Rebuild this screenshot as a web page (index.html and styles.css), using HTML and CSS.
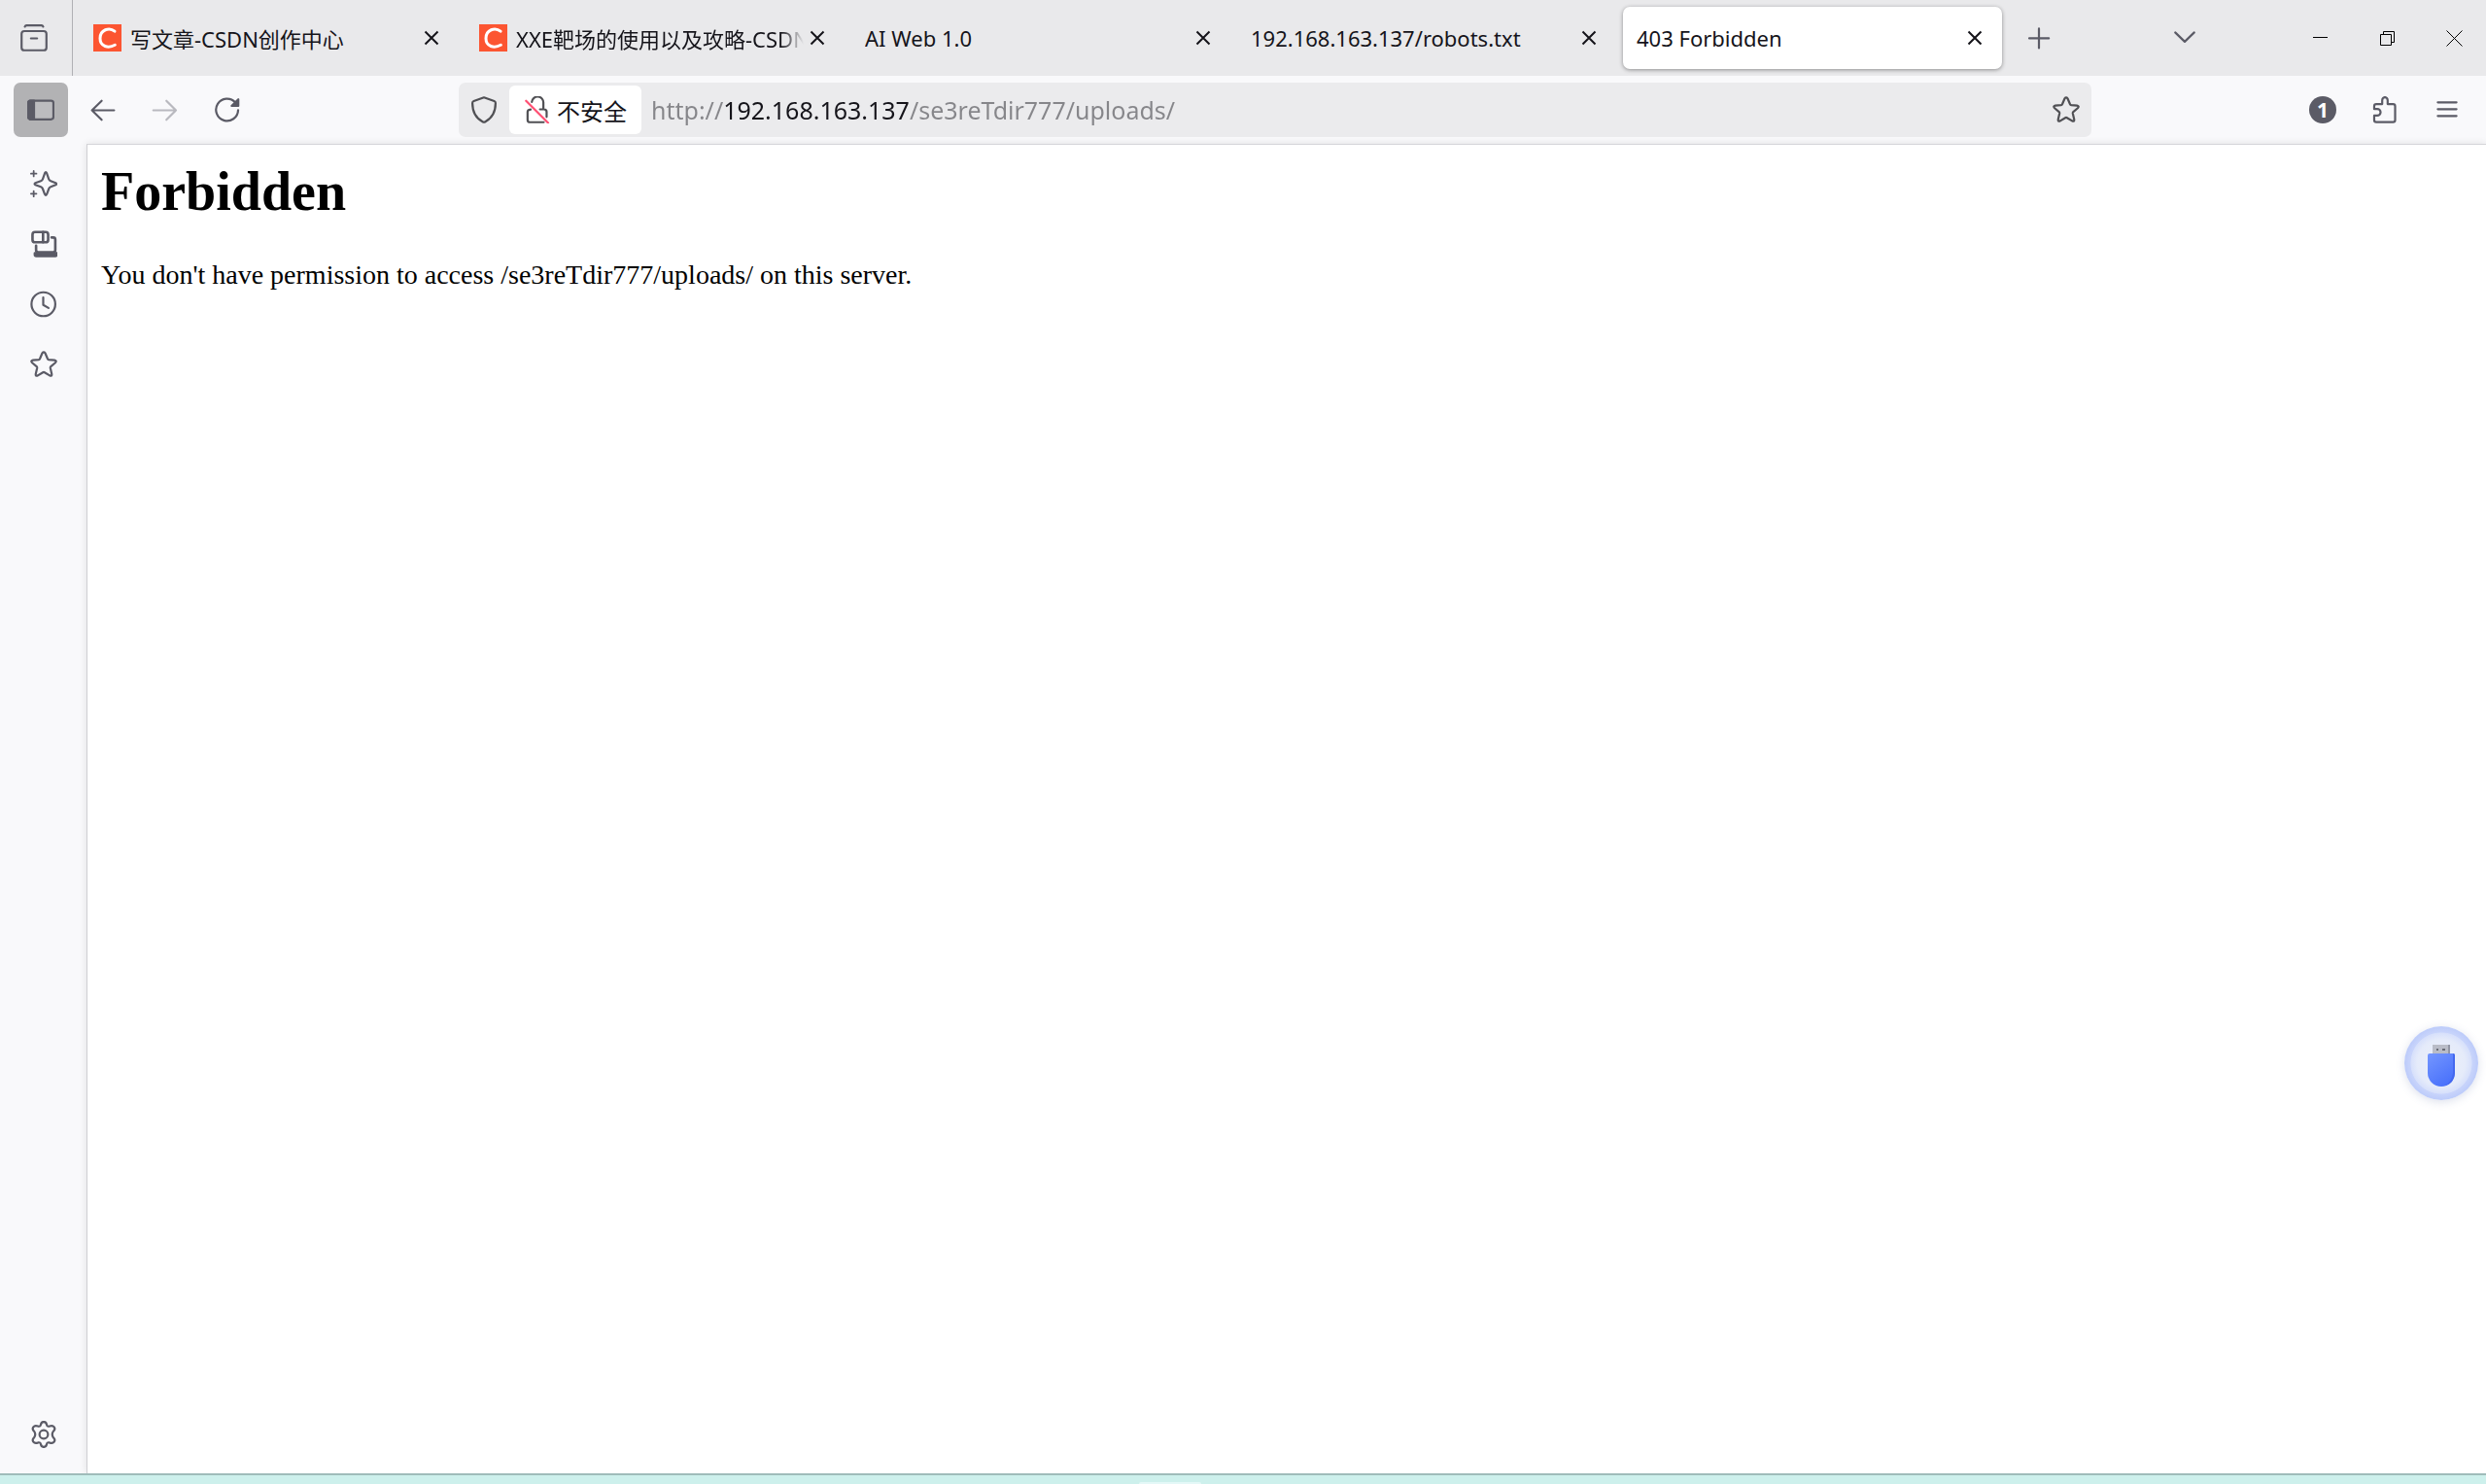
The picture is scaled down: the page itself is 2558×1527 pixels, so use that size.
FILE: index.html
```html
<!DOCTYPE html>
<html lang="zh-CN">
<head>
    <meta charset="UTF-8">
    <meta name="viewport" content="width=device-width, initial-scale=1.0">
    <title>403 Forbidden</title>
    <link rel="stylesheet" href="styles.css">
</head>
<body>
    <svg class="defs" width="0" height="0">
        <symbol id="close" viewBox="0 0 16 16"><path d="M1.5 1.5l13 13M14.5 1.5l-13 13"/></symbol>
        <symbol id="star" viewBox="0 0 16 16"><path d="M7.1 1.4Q8 .2 8.9 1.4L10.3 4.7Q10.5 5.1 11 5.2L14.4 5.5Q15.9 5.8 14.8 7L12.2 9.2Q11.8 9.6 11.9 10.1L12.7 13.6Q12.9 15.1 11.5 14.5L8.5 12.7Q8 12.4 7.5 12.7L4.5 14.5Q3.1 15.1 3.3 13.6L4.1 10.1Q4.2 9.6 3.8 9.2L1.2 7Q.1 5.8 1.6 5.5L5 5.2Q5.5 5.1 5.7 4.7Z"/></symbol>
        <symbol id="csdn" viewBox="0 0 29 28"><path class="csdn-bg" d="M0 0h29v28H0z"/><path class="csdn-c" d="M22 7.2C16.500 2.600 7 5.500 7 14.500c0 8.500 8.500 10.500 15.300 6.800"/></symbol>
    </svg>

    <header>
        <div class="tab-bar">
            <button class="view-button" aria-label="Firefox View">
                <svg class="icon" viewBox="0 0 16 16"><path d="M2.600 1.400Q2.800.6 3.800.6h8.400q1 0 1.200.8"/><rect x=".7" y="4" width="14.600" height="11.300" rx="1.600"/><path d="M6.200 8.300h3.600"/></svg>
            </button>
            <div class="tabs">
                <div class="tab">
                    <svg class="favicon"><use href="#csdn"/></svg>
                    <span class="tab-title">写文章-CSDN创作中心</span>
                    <button class="tab-close" aria-label="关闭"><svg><use href="#close"/></svg></button>
                </div>
                <div class="tab">
                    <svg class="favicon"><use href="#csdn"/></svg>
                    <span class="tab-title fade">XXE靶场的使用以及攻略-CSDN</span>
                    <button class="tab-close" aria-label="关闭"><svg><use href="#close"/></svg></button>
                </div>
                <div class="tab">
                    <span class="tab-title">AI Web 1.0</span>
                    <button class="tab-close" aria-label="关闭"><svg><use href="#close"/></svg></button>
                </div>
                <div class="tab">
                    <span class="tab-title">192.168.163.137/robots.txt</span>
                    <button class="tab-close" aria-label="关闭"><svg><use href="#close"/></svg></button>
                </div>
                <div class="tab active">
                    <span class="tab-title">403 Forbidden</span>
                    <button class="tab-close" aria-label="关闭"><svg><use href="#close"/></svg></button>
                </div>
            </div>
            <button class="tool new-tab" aria-label="新建标签页">
                <svg class="icon" viewBox="0 0 16 16"><path d="M8 2.500v11.500M2.300 8.250h11.500"/></svg>
            </button>
            <button class="tool all-tabs" aria-label="列出所有标签页">
                <svg class="icon" viewBox="0 0 16 16"><path d="M2.400 4.800L8 10.200l5.600-5.400"/></svg>
            </button>
            <div class="window-buttons">
                <button aria-label="最小化"><svg viewBox="0 0 17 17"><path d="M1 7.500h15"/></svg></button>
                <button aria-label="还原"><svg viewBox="0 0 17 17"><path d="M1.500 4.500h11v11h-11zM4.500 4.500v-3h11v11h-3"/></svg></button>
                <button aria-label="关闭窗口"><svg viewBox="0 0 17 17"><path d="M.5.5l16 16M16.500.5l-16 16"/></svg></button>
            </div>
        </div>

        <nav class="toolbar">
            <button class="tool pressed" aria-label="侧栏">
                <svg class="icon" viewBox="0 0 16 16"><rect x=".6" y="2.600" width="14.800" height="11" rx="1.400"/><path class="solid" d="M.6 3.500L1.500 2.600H4v11H1.500L.6 12.700z"/></svg>
            </button>
            <button class="tool" aria-label="后退">
                <svg class="icon" viewBox="0 0 16 16"><path d="M14.500 8.300H1.500M7.200 2.700L1.500 8.300l5.700 5.600"/></svg>
            </button>
            <button class="tool" aria-label="前进" disabled>
                <svg class="icon" viewBox="0 0 16 16"><path d="M1 8.300h13.300M8.700 2.700l5.600 5.600-5.600 5.600"/></svg>
            </button>
            <button class="tool" aria-label="重新载入">
                <svg class="icon" viewBox="0 0 16 16"><path d="M12.600 3.600A6.500 6.500 0 1 0 14.300 8.200"/><path class="solid" d="M14.400 1.800v3.900h-3.900z"/></svg>
            </button>
            <div class="spring"></div>
            <div class="url-bar">
                <button class="url-button" aria-label="跟踪保护">
                    <svg class="icon" viewBox="0 0 16 16"><path d="M8 .7l6 2.200c.5.2.8.6.8 1.100C14.800 9.200 12.700 13 8.600 15.100q-.6.300-1.200 0C3.300 13 1.200 9.200 1.200 4c0-.5.3-.9.8-1.100z"/></svg>
                </button>
                <button class="identity">
                    <svg class="icon" viewBox="0 0 16 16"><path d="M4.700 3.400A3.400 3.400 0 0 1 11.500 4v3.700M9.500 7.700h2.400q1.500 0 1.500 1.500v3M4 7.800Q2.200 8 2.200 9.200v4.600q0 1.500 1.500 1.500h8"/><path class="strike" d="M1.300 2.700l13 13"/></svg>
                    <span>不安全</span>
                </button>
                <input class="url" type="text" aria-label="地址栏" spellcheck="false" value="http://192.168.163.137/se3reTdir777/uploads/">
                <button class="url-button" aria-label="添加书签"><svg class="icon"><use href="#star"/></svg></button>
            </div>
            <div class="spring"></div>
            <button class="tool" aria-label="通知">
                <span class="count">1</span>
            </button>
            <button class="tool" aria-label="扩展">
                <svg class="icon" viewBox="0 0 16 16"><path d="M6.400 4.600V2.400a1.600 1.800 0 0 1 3.200 0v2.200h3.200a1.200 1.200 0 0 1 1.200 1.200v8.200a1.200 1.200 0 0 1-1.200 1.200H2.900a1.200 1.200 0 0 1-1.200-1.200v-2.600h1.800a1.900 1.900 0 0 0 0-3.900H1.700V5.800a1.200 1.200 0 0 1 1.200-1.200z"/></svg>
            </button>
            <button class="tool" aria-label="菜单">
                <svg class="icon" viewBox="0 0 16 16"><path d="M2.500 3.600h11M2.500 7.600h11M2.500 11.600h11"/></svg>
            </button>
        </nav>
    </header>

    <div class="main">
        <aside class="sidebar">
            <button class="tool" aria-label="AI 聊天机器人">
                <svg class="icon" viewBox="0 0 16 16"><path d="M8.600 1.900q.6-1.300 1.200 0l1.200 3.400q.3.800 1.100 1.100l2.900 1.200q1 .6 0 1.100l-2.900 1.200q-.8.300-1.100 1.100l-1.200 3.200q-.6 1.200-1.200 0l-1.200-3.200q-.3-.8-1.100-1.100L3.100 8.700q-1-.5 0-1.100l3.200-1.200q.8-.3 1.100-1.100z"/><path class="thin" d="M2.100.5v3.200M.5 2.100h3.200M2.100 12.300v3.200M.5 13.900h3.200"/></svg>
            </button>
            <button class="tool" aria-label="其他设备的标签页">
                <svg class="icon bold" viewBox="0 0 16 16"><rect x="1.400" y="1" width="9.200" height="6" rx="1.500"/><path d="M7.600 1v6M12.600 4.200h1q1.200 0 1.200 1.200v6.100q0 1.400-1.400 1.400H4.900q-1.400 0-1.400-1.400V9"/><path class="solid" d="M2.800 13.400h4.500v.9h3.200v-.9h5v1q0 .7-.7.7H3.500q-.7 0-.7-.7z"/></svg>
            </button>
            <button class="tool" aria-label="历史">
                <svg class="icon" viewBox="0 0 16 16"><circle cx="7.800" cy="8" r="7"/><path d="M7.700 4v4.400l3.100 1.800"/></svg>
            </button>
            <button class="tool" aria-label="书签"><svg class="icon"><use href="#star"/></svg></button>
            <button class="tool settings" aria-label="自定义侧栏">
                <svg class="icon" viewBox="0 0 16 16"><circle cx="8" cy="8" r="2.500"/><path d="M6.300 2.100Q6.600.6 8 .6t1.700 1.500q.2 1.500 1.600 1.100 1.900-.8 2.800.4.900 1.500-.4 2.500-1.400 1.900 0 3.800 1.300 1 .4 2.500-.9 1.200-2.800.4-1.400-.4-1.600 1.100Q9.400 15.400 8 15.400t-1.700-1.500q-.2-1.500-1.600-1.100-1.900.8-2.800-.4-.9-1.500.4-2.500 1.400-1.900 0-3.800-1.300-1-.4-2.500.9-1.200 2.800-.4 1.400.4 1.600-1.100z"/></svg>
            </button>
        </aside>
        <main class="page">
            <h1>Forbidden</h1>
            <p>You don't have permission to access /se3reTdir777/uploads/ on this server.</p>
        </main>
    </div>

    <footer class="taskbar"><div class="taskbar-item"></div></footer>

    <button class="usb" aria-label="USB">
        <svg viewBox="0 0 76 76">
            <defs>
                <radialGradient id="disc"><stop offset="0" stop-color="#edf1f9"/><stop offset=".65" stop-color="#e5ebfa"/><stop offset=".82" stop-color="#d7e0fb"/><stop offset=".84" stop-color="#c8d4fb"/><stop offset="1" stop-color="#bccbfa"/></radialGradient>
                <linearGradient id="stick" x2=".6" y2="1"><stop offset="0" stop-color="#7496ff"/><stop offset="1" stop-color="#4a72fb"/></linearGradient>
            </defs>
            <circle cx="38" cy="38" r="38" fill="url(#disc)"/>
            <path d="M29 19h18v10H29z" fill="#b9bcc7"/>
            <path d="M45 19h2v10h-2z" fill="#9296a5"/>
            <path d="M33 23h2v2h-2zM39 23h3v2h-3z" fill="#686b76"/>
            <path d="M24 30q0-2 2-2h24q2 0 2 2v18a14 14 0 0 1-28 0z" fill="url(#stick)"/>
            <path d="M50 28q2 0 2 2v18q-1 11-10 13 7-4 8-13z" fill="#4468ee"/>
        </svg>
    </button>
</body>
</html>
```

FILE: styles.css
```css
* {
    box-sizing: border-box;
}
body {
    margin: 0;
    min-height: 100vh;
    display: flex;
    flex-direction: column;
    font-family: "Noto Sans", "Noto Sans CJK SC", sans-serif;
    background-color: #f9f9fb;
    color: #15141a;
}
button {
    display: flex;
    align-items: center;
    justify-content: center;
    padding: 0;
    border: 0;
    background: none;
    color: #5b5b66;
    font: inherit;
}
.defs {
    position: absolute;
}
.icon {
    width: 28px;
    height: 28px;
    flex: none;
    fill: none;
    stroke: currentColor;
    stroke-width: 1.25;
    stroke-linecap: round;
    stroke-linejoin: round;
}
.bold {
    stroke-width: 1.5;
}
.solid {
    fill: currentColor;
}
.thin {
    stroke-width: 1;
}

/* tabs */
.tab-bar {
    display: flex;
    align-items: center;
    height: 78px;
    background-color: #e9e9eb;
}
.view-button {
    width: 75px;
    height: 78px;
    padding-right: 4px;
    border-right: 1px solid #b0b0b4;
}
.tabs {
    display: flex;
    flex: 0 1 1978px;
    min-width: 0;
    gap: 7px;
    margin-left: 7px;
}
.tab {
    display: flex;
    align-items: center;
    flex: 1;
    min-width: 0;
    height: 64px;
    padding: 0 14px;
    border-radius: 7px;
    font-size: 22px;
}
.tab.active {
    background-color: #fff;
    box-shadow: 0 1px 4px rgba(0, 0, 0, 0.4);
}
.favicon {
    width: 29px;
    height: 28px;
    flex: none;
    margin-right: 9px;
}
.csdn-bg {
    fill: #fc5531;
}
.csdn-c {
    fill: none;
    stroke: #fff;
    stroke-width: 3;
    stroke-linecap: round;
}
.tab-title {
    flex: 1;
    overflow: hidden;
    white-space: nowrap;
}
.fade {
    -webkit-mask-image: linear-gradient(to left, transparent, #000 24px);
    mask-image: linear-gradient(to left, transparent, #000 24px);
}
.tab-close {
    width: 28px;
    height: 28px;
    color: #15141a;
}
.tab-close svg {
    width: 16px;
    height: 16px;
    stroke: currentColor;
    stroke-width: 2;
}
.tool {
    width: 56px;
    height: 56px;
    flex: none;
    border-radius: 7px;
}
.tool:disabled {
    opacity: 0.4;
}
.new-tab {
    margin-left: 10px;
}
.all-tabs {
    margin-left: auto;
    margin-right: 75px;
}
.window-buttons {
    display: flex;
}
.window-buttons button {
    width: 69px;
    height: 78px;
    padding-left: 4px;
}
.window-buttons svg {
    width: 17px;
    height: 17px;
    fill: none;
    stroke: #000;
    stroke-width: 1;
}

/* toolbar */
.toolbar {
    display: flex;
    align-items: center;
    height: 70px;
    padding: 0 12px 0 14px;
}
.toolbar .tool + .tool {
    margin-left: 8px;
}
.pressed {
    background-color: #b2b2b4;
}
.pressed .icon rect {
    fill: #bcbcbf;
}
.spring {
    flex: 1;
}
.url-bar {
    display: flex;
    align-items: center;
    flex: 8;
    height: 56px;
    border-radius: 7px;
    background-color: #ebebed;
}
.url-button {
    width: 52px;
    height: 56px;
    flex: none;
    color: #505054;
}
.identity {
    height: 50px;
    padding: 0 15px;
    gap: 6px;
    border-radius: 6px;
    background-color: #fff;
    color: #15141a;
    font-size: 24px;
}
.identity .icon {
    color: #505054;
}
.icon .strike {
    stroke: #ff4f72;
}
/* host part of the address is darker than the rest */
.url {
    flex: 1;
    min-width: 0;
    height: 50px;
    margin-left: 10px;
    padding: 0;
    border: 0;
    outline: 0;
    font: inherit;
    font-size: 25px;
    color: transparent;
    caret-color: #15141a;
    background: linear-gradient(to right, #86868a 75px, #15141a 75px, #15141a 266px, #86868a 266px);
    -webkit-background-clip: text;
    background-clip: text;
}
.count {
    width: 28px;
    height: 28px;
    border-radius: 50%;
    background-color: #5b5b66;
    color: #fff;
    font-size: 21px;
    font-weight: bold;
    line-height: 28px;
}

/* sidebar and page */
.main {
    display: flex;
    flex: 1;
}
.sidebar {
    display: flex;
    flex-direction: column;
    align-items: center;
    gap: 6px;
    width: 89px;
    padding: 13px 0 12px;
}
.settings {
    margin-top: auto;
}
.page {
    flex: 1;
    padding: 16px 14px;
    border-top: 1px solid #d5d5d9;
    border-left: 1px solid #cfcfd3;
    background-color: #fff;
    box-shadow: 0 0 8px rgba(0, 0, 0, 0.1);
    color: #000;
    font-family: "Liberation Serif", serif;
    font-size: 28px;
}
.page h1 {
    margin: 0 0 38px;
    font-size: 56px;
    line-height: 64px;
}
.page p {
    margin: 0;
}

/* desktop strip under the window */
.taskbar {
    display: flex;
    justify-content: center;
    height: 11px;
    padding-top: 7px;
    border-top: 2px solid #9fbcba;
    background-color: #cdf0ec;
}
.taskbar-item {
    width: 64px;
    margin-right: 150px;
    border-radius: 6px 6px 0 0;
    background-color: #e4f8f7;
}

.usb {
    position: fixed;
    right: 8px;
    bottom: 395px;
    width: 76px;
    height: 76px;
    border-radius: 50%;
    box-shadow: 0 2px 10px rgba(80, 100, 160, 0.2);
}
.usb svg {
    width: 76px;
    height: 76px;
}
```
